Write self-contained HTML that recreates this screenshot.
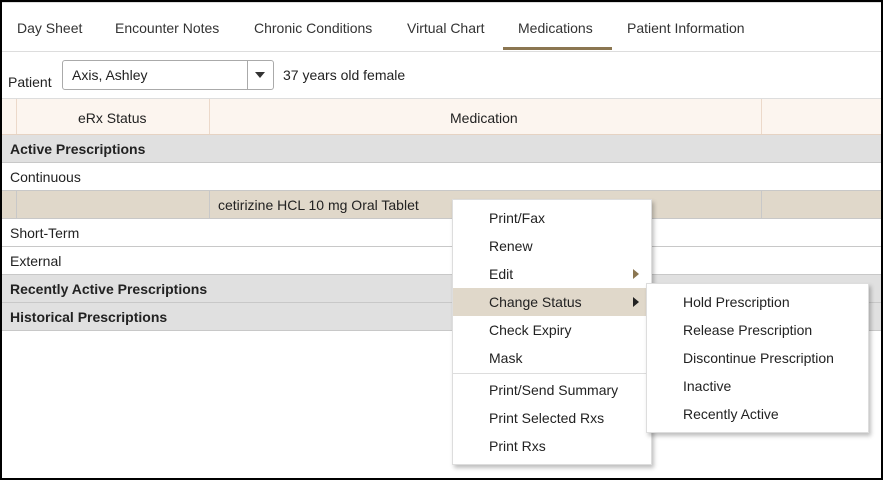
<!DOCTYPE html><html><head><style>
*{margin:0;padding:0;box-sizing:border-box}
body{width:883px;height:480px;overflow:hidden;font-family:"Liberation Sans",sans-serif;font-size:14px;color:#222;background:#fff}
.frame{position:absolute;left:0;top:0;width:883px;height:480px;border:2px solid #000;z-index:9}
.a{position:absolute;white-space:nowrap}
.tab{position:absolute;top:20px;font-size:14px;color:#333}
.row{position:absolute;left:2px;width:879px;height:28px;border-bottom:1px solid #c8c8c8;line-height:28px;padding-left:8px}
.g{background:#e0e0e0;font-weight:bold}
.menu{position:absolute;background:#fff;border:1px solid #ddd;box-shadow:2px 3px 4px rgba(0,0,0,.25)}
.mi{position:absolute;left:0;right:0;height:28px;line-height:28px;padding-left:36px}
.tri{position:absolute;width:0;height:0;border-top:5px solid transparent;border-bottom:5px solid transparent}
</style></head><body>
<div class="frame"></div>
<div class="a" style="left:2px;top:2px;width:879px;height:1px;background:#ddd"></div>
<div class="tab" style="left:17px">Day Sheet</div>
<div class="tab" style="left:115px">Encounter Notes</div>
<div class="tab" style="left:254px">Chronic Conditions</div>
<div class="tab" style="left:407px">Virtual Chart</div>
<div class="tab" style="left:518px">Medications</div>
<div class="tab" style="left:627px">Patient Information</div>
<div class="a" style="left:503px;top:47px;width:109px;height:3px;background:#8b7651"></div>
<div class="a" style="left:2px;top:51px;width:879px;height:1px;background:#ddd"></div>
<div class="a" style="left:8px;top:74px">Patient</div>
<div class="a" style="left:62px;top:60px;width:212px;height:30px;border:1px solid #aaa;border-radius:3px"></div>
<div class="a" style="left:247px;top:61px;width:1px;height:28px;background:#aaa"></div>
<div class="a" style="left:72px;top:67px">Axis, Ashley</div>
<div class="tri" style="left:255px;top:72px;border:5px solid transparent;border-top:6px solid #333;border-bottom:0"></div>
<div class="a" style="left:283px;top:67px">37 years old female</div>
<div class="a" style="left:2px;top:98px;width:879px;height:37px;background:#fcf5ef;border-top:1px solid #ddd;border-bottom:1px solid #e6d3c3"></div>
<div class="a" style="left:16px;top:99px;width:1px;height:35px;background:#ecd9ca"></div>
<div class="a" style="left:209px;top:99px;width:1px;height:35px;background:#ecd9ca"></div>
<div class="a" style="left:761px;top:99px;width:1px;height:35px;background:#ecd9ca"></div>
<div class="a" style="left:78px;top:110px">eRx Status</div>
<div class="a" style="left:450px;top:110px">Medication</div>
<div class="row g" style="top:135px">Active Prescriptions</div>
<div class="row" style="top:163px">Continuous</div>
<div class="row" style="top:191px;background:#e0d8ca;padding-left:216px">cetirizine HCL 10 mg Oral Tablet</div>
<div class="a" style="left:16px;top:191px;width:1px;height:28px;background:#c8c8c8"></div>
<div class="a" style="left:209px;top:191px;width:1px;height:28px;background:#c8c8c8"></div>
<div class="a" style="left:761px;top:191px;width:1px;height:28px;background:#c8c8c8"></div>
<div class="row" style="top:219px">Short-Term</div>
<div class="row" style="top:247px">External</div>
<div class="row g" style="top:275px">Recently Active Prescriptions</div>
<div class="row g" style="top:303px">Historical Prescriptions</div>
<div class="menu" style="left:452px;top:199px;width:200px;height:266px">
<div class="mi" style="top:4px">Print/Fax</div>
<div class="mi" style="top:32px">Renew</div>
<div class="mi" style="top:60px">Edit</div>
<div class="tri" style="left:180px;top:69px;border-left:6px solid #8b7651"></div>
<div class="mi" style="top:88px;background:#e0d8ca;right:5px">Change Status</div>
<div class="tri" style="left:180px;top:97px;border-left:6px solid #222"></div>
<div class="mi" style="top:116px">Check Expiry</div>
<div class="mi" style="top:144px">Mask</div>
<div class="a" style="left:0;right:0;top:173px;height:1px;background:#ddd"></div>
<div class="mi" style="top:176px">Print/Send Summary</div>
<div class="mi" style="top:204px">Print Selected Rxs</div>
<div class="mi" style="top:232px">Print Rxs</div>
</div>
<div class="menu" style="left:646px;top:283px;width:223px;height:150px">
<div class="mi" style="top:4px">Hold Prescription</div>
<div class="mi" style="top:32px">Release Prescription</div>
<div class="mi" style="top:60px">Discontinue Prescription</div>
<div class="mi" style="top:88px">Inactive</div>
<div class="mi" style="top:116px">Recently Active</div>
</div>
</body></html>
